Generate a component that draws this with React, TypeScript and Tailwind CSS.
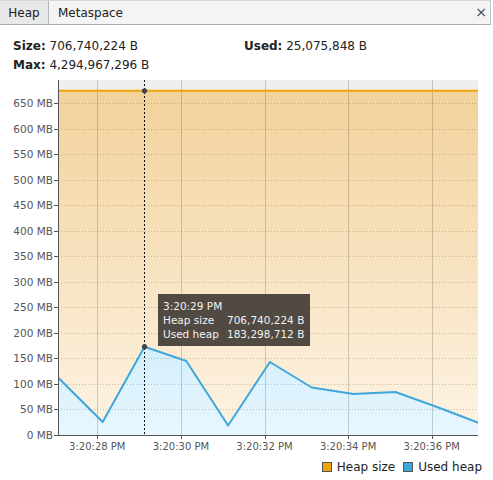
import React from 'react'

const LEFT = 58
const RIGHT = 478
const TOP = 80
const BOTTOM = 435
const PX_PER_MB = (BOTTOM - 103) / 650

const yOf = (mb: number) => BOTTOM - mb * PX_PER_MB

// sampled points (x, y) in page coordinates
const used: [number, number][] = [
  [55, 374.5],
  [102.7, 422],
  [144.5, 346.7],
  [186.3, 361],
  [228.1, 425.5],
  [269.9, 362],
  [311.7, 387.5],
  [353.5, 394],
  [395.3, 392],
  [437.1, 407],
  [478.9, 423],
]

const heapY = yOf(706740224 / 1048576)
const timeTicks = [
  { x: 97.3, label: '3:20:28 PM' },
  { x: 180.9, label: '3:20:30 PM' },
  { x: 264.5, label: '3:20:32 PM' },
  { x: 348.1, label: '3:20:34 PM' },
  { x: 431.7, label: '3:20:36 PM' },
]
const mbTicks = Array.from({ length: 14 }, (_, i) => i * 50)

function Chart() {
  const line = used.map(([x, y], i) => `${i ? 'L' : 'M'}${x},${y}`).join(' ')
  const area = `${line} L478.9,${BOTTOM} L55,${BOTTOM} Z`
  const cursorX = 144.5

  return (
    <svg width={493} height={383} viewBox="0 72 493 383" className="block">
      <defs>
        <clipPath id="plot">
          <rect x={LEFT} y={TOP} width={RIGHT - LEFT} height={BOTTOM - TOP} />
        </clipPath>
        <linearGradient id="heapFill" gradientUnits="userSpaceOnUse" x1="0" y1={heapY} x2="0" y2={BOTTOM}>
          <stop offset="0" stopColor="#f2d29b" />
          <stop offset="1" stopColor="#fdf3e4" />
        </linearGradient>
        <linearGradient id="usedFill" gradientUnits="userSpaceOnUse" x1="0" y1="340" x2="0" y2={BOTTOM}>
          <stop offset="0" stopColor="#d3eefc" />
          <stop offset="1" stopColor="#e7f7ff" />
        </linearGradient>
      </defs>

      <g clipPath="url(#plot)">
        <rect x={LEFT} y={TOP} width={RIGHT - LEFT} height={BOTTOM - TOP} fill="#efefef" />
        <rect x={LEFT} y={heapY} width={RIGHT - LEFT} height={BOTTOM - heapY} fill="url(#heapFill)" />
        <path d={area} fill="url(#usedFill)" />

        {mbTicks.slice(1).map((mb) => (
          <line
            key={mb}
            x1={LEFT}
            x2={RIGHT}
            y1={Math.round(yOf(mb)) + 0.5}
            y2={Math.round(yOf(mb)) + 0.5}
            stroke="rgba(110,90,60,0.35)"
            strokeDasharray="1 2"
          />
        ))}
        {timeTicks.map((t) => (
          <line key={t.x} x1={Math.round(t.x) + 0.5} x2={Math.round(t.x) + 0.5} y1={TOP} y2={BOTTOM} stroke="rgba(0,0,0,0.17)" />
        ))}

        <line x1={LEFT} x2={RIGHT} y1={heapY} y2={heapY} stroke="#f0a30a" strokeWidth={2} />
        <path d={line} fill="none" stroke="#3ea8dc" strokeWidth={2} strokeLinejoin="round" />
      </g>

      {/* axes */}
      <line x1={LEFT + 0.5} x2={LEFT + 0.5} y1={TOP} y2={BOTTOM} stroke="#555" />
      <line x1={LEFT} x2={RIGHT} y1={BOTTOM + 0.5} y2={BOTTOM + 0.5} stroke="#555" />
      {mbTicks.map((mb) => {
        const y = Math.round(yOf(mb)) + 0.5
        return (
          <g key={mb}>
            <line x1={LEFT - 4} x2={LEFT} y1={y} y2={y} stroke="#555" />
            <text x={LEFT - 5} y={y + 3.8} textAnchor="end" fontSize={10.5} fill="#555" fontFamily="'DejaVu Sans', sans-serif">
              {mb} MB
            </text>
          </g>
        )
      })}
      {timeTicks.map((t) => (
        <g key={t.label}>
          <line x1={Math.round(t.x) + 0.5} x2={Math.round(t.x) + 0.5} y1={BOTTOM} y2={BOTTOM + 4} stroke="#555" />
          <text x={t.x} y={450} textAnchor="middle" fontSize={10} fill="#555" fontFamily="'DejaVu Sans', sans-serif">
            {t.label}
          </text>
        </g>
      ))}

      {/* cursor */}
      <line x1={cursorX} x2={cursorX} y1={TOP} y2={BOTTOM} stroke="#111" strokeDasharray="2 2" />
      <circle cx={cursorX} cy={heapY} r={2.6} fill="#444" />
      <circle cx={cursorX} cy={346.7} r={2.6} fill="#444" />
    </svg>
  )
}

export default function App() {
  return (
    <div className="w-[493px] h-[480px] bg-white overflow-hidden font-['DejaVu_Sans',sans-serif] text-[#222]">
      {/* tabs */}
      <div className="h-[25px] flex items-stretch border-t border-r border-b border-t-[#d6d6d6] border-r-[#c4c4c4] border-b-[#a9a9a9] bg-[#f4f4f4] text-[12px] w-[491px]">
        <div className="w-[49px] flex items-center justify-center bg-[#e8e8e8] border-r border-[#b5b5b5]">Heap</div>
        <div className="px-[9px] flex items-center">Metaspace</div>
        <div className="ml-auto pr-[3px] flex items-center text-[#444] text-[14px]">×</div>
      </div>

      {/* stats */}
      <div className="grid grid-cols-[231px_auto] pl-[13px] pt-[12px] text-[12px] leading-[19px]">
        <div>
          <span className="font-bold">Size:</span> 706,740,224 B
        </div>
        <div>
          <span className="font-bold">Used:</span> 25,075,848 B
        </div>
        <div>
          <span className="font-bold">Max:</span> 4,294,967,296 B
        </div>
      </div>

      {/* chart */}
      <div className="relative mt-[-3px]">
        <Chart />
        <div className="absolute left-[158px] top-[222px] w-[152px] h-[52px] bg-[#514a42] text-[#f2f2f2] text-[10.5px] leading-[14px] pl-[5px] pt-[5px]">
          <div>3:20:29 PM</div>
          <div className="grid grid-cols-[64px_auto]">
            <span>Heap size</span>
            <span>706,740,224 B</span>
            <span>Used heap</span>
            <span>183,298,712 B</span>
          </div>
        </div>
      </div>

      {/* legend */}
      <div className="flex items-center justify-end gap-[8px] pr-[11px] mt-[3px] text-[12px] text-[#222]">
        <div className="flex items-center gap-[5px]">
          <span className="w-[10px] h-[10px] bg-[#f0a30a] border border-[#555]" />
          <span>Heap size</span>
        </div>
        <div className="flex items-center gap-[5px]">
          <span className="w-[10px] h-[10px] bg-[#3ea8dc] border border-[#555]" />
          <span>Used heap</span>
        </div>
      </div>
    </div>
  )
}
